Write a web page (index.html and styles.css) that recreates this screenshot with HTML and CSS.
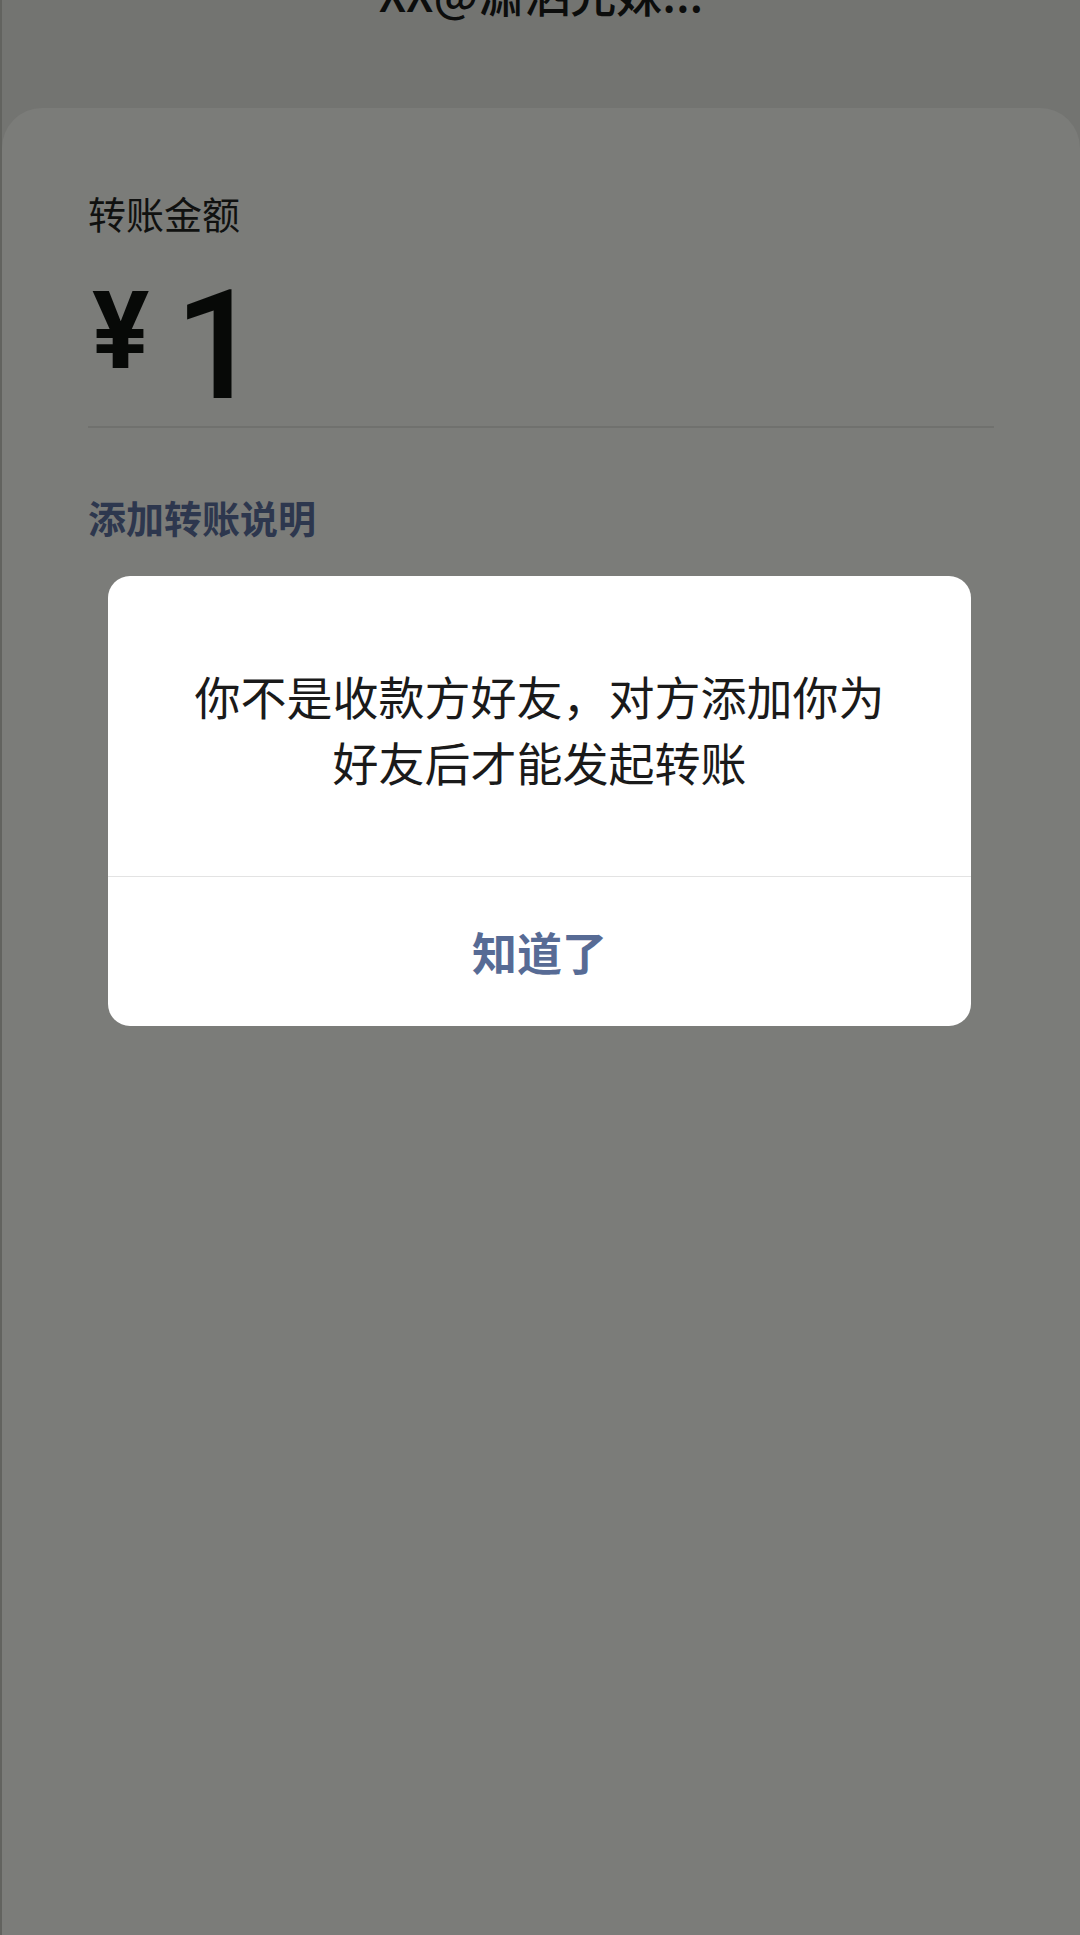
FILE: index.html
```html
<!DOCTYPE html>
<html lang="zh-CN">
<head>
<meta charset="utf-8">
<title>转账</title>
<link rel="stylesheet" href="styles.css">
</head>
<body>
<div class="page">
  <div class="title">XX@潇洒兄妹...</div>
  <div class="card">
    <div class="label">转账金额</div>
    <div class="amount"><span class="yen">¥</span><span class="num">1</span></div>
    <div class="divider"></div>
    <div class="note">添加转账说明</div>
  </div>
</div>
<div class="dialog">
  <div class="dialog-body">你不是收款方好友，对方添加你为<br>好友后才能发起转账</div>
  <div class="dialog-btn">知道了</div>
</div>
</body>
</html>
```
FILE: styles.css
```css
html, body {
  margin: 0;
  padding: 0;
}
body {
  width: 1080px;
  height: 1935px;
  overflow: hidden;
  background: #737471;
  font-family: "Noto Sans CJK SC", "Noto Sans", sans-serif;
}
.page {
  height: 1935px;
  border-left: 2px solid #62635f;
  box-sizing: border-box;
  display: flex;
  flex-direction: column;
}
.title {
  margin-top: -31px;
  height: 139px;
  flex-shrink: 0;
  font-size: 46px;
  line-height: 46px;
  color: #0c0d0c;
  text-align: center;
  font-weight: 500;
}
.card {
  flex: 1;
  background: #7b7c79;
  border-radius: 40px 40px 0 0;
  padding: 0 86px 0 86px;
}
.label {
  padding-top: 85px;
  font-size: 38px;
  line-height: 40px;
  color: #101110;
}
.amount {
  display: flex;
  align-items: flex-start;
  margin-top: 39px;
  color: #070907;
  font-family: Roboto, "Noto Sans", sans-serif;
}
.yen {
  font-size: 107px;
  font-weight: 700;
  line-height: 1;
  margin-top: 6px;
  margin-left: 4px;
}
.num {
  font-size: 152px;
  font-weight: 500;
  line-height: 1;
  margin-left: 25px;
  margin-top: -2px;
  margin-bottom: 4px;
}
.divider {
  margin-top: 0;
  height: 2px;
  background: #70716e;
}
.note {
  margin-top: 69px;
  font-size: 38px;
  line-height: 40px;
  font-weight: 700;
  color: #2d374e;
}
.dialog {
  position: absolute;
  left: 108px;
  top: 576px;
  width: 863px;
  height: 450px;
  background: #ffffff;
  border-radius: 22px;
  display: flex;
  flex-direction: column;
  overflow: hidden;
}
.dialog-body {
  height: 300px;
  display: flex;
  align-items: center;
  justify-content: center;
  text-align: center;
  font-size: 46px;
  line-height: 66px;
  color: #1a1a1a;
  padding-top: 4px;
  box-sizing: border-box;
}
.dialog-btn {
  flex: 1;
  border-top: 1px solid #e3e3e3;
  display: flex;
  align-items: center;
  justify-content: center;
  font-size: 45px;
  font-weight: 700;
  color: #576b95;
}
```
